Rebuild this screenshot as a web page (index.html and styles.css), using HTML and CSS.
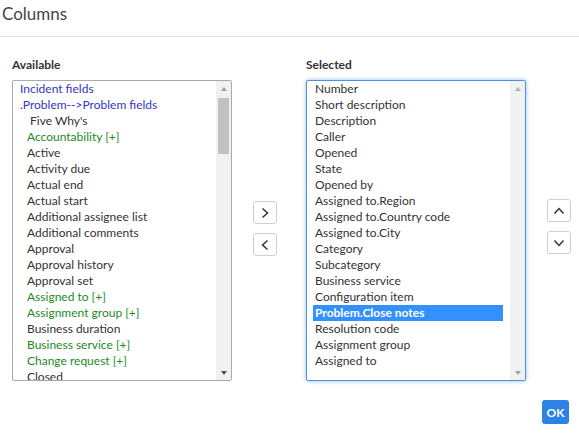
FILE: index.html
```html
<!DOCTYPE html>
<html>
<head>
<meta charset="utf-8">
<link rel="stylesheet" href="styles.css">
</head>
<body>
<div class="dialog">
  <div class="header"><span class="title">Columns</span></div>
  <div class="content">
    <div class="col">
      <div class="label">Available</div>
      <div class="listbox">
        <div class="list">
          <div class="item grp">Incident fields</div>
          <div class="item grp">.Problem--&gt;Problem fields</div>
          <div class="item sub">Five Why's</div>
          <div class="item opt ref">Accountability [+]</div>
          <div class="item opt">Active</div>
          <div class="item opt">Activity due</div>
          <div class="item opt">Actual end</div>
          <div class="item opt">Actual start</div>
          <div class="item opt">Additional assignee list</div>
          <div class="item opt">Additional comments</div>
          <div class="item opt">Approval</div>
          <div class="item opt">Approval history</div>
          <div class="item opt">Approval set</div>
          <div class="item opt ref">Assigned to [+]</div>
          <div class="item opt ref">Assignment group [+]</div>
          <div class="item opt">Business duration</div>
          <div class="item opt ref">Business service [+]</div>
          <div class="item opt ref">Change request [+]</div>
          <div class="item opt">Closed</div>
        </div>
        <div class="scrollbar">
          <div class="arrow up"></div>
          <div class="track"><div class="thumb"></div></div>
          <div class="arrow down"></div>
        </div>
      </div>
    </div>
    <div class="btns lr">
      <button class="iconbtn"><svg width="12" height="12" viewBox="0 0 12 12"><path d="M3.5 1.5 L8.5 6 L3.5 10.5" fill="none" stroke="#333" stroke-width="1.5"/></svg></button>
      <button class="iconbtn"><svg width="12" height="12" viewBox="0 0 12 12"><path d="M8.5 1.5 L3.5 6 L8.5 10.5" fill="none" stroke="#333" stroke-width="1.5"/></svg></button>
    </div>
    <div class="col">
      <div class="label">Selected</div>
      <div class="listbox focused">
        <div class="list sel">
          <div class="item">Number</div>
          <div class="item">Short description</div>
          <div class="item">Description</div>
          <div class="item">Caller</div>
          <div class="item">Opened</div>
          <div class="item">State</div>
          <div class="item">Opened by</div>
          <div class="item">Assigned to.Region</div>
          <div class="item">Assigned to.Country code</div>
          <div class="item">Assigned to.City</div>
          <div class="item">Category</div>
          <div class="item">Subcategory</div>
          <div class="item">Business service</div>
          <div class="item">Configuration item</div>
          <div class="item active">Problem.Close notes</div>
          <div class="item">Resolution code</div>
          <div class="item">Assignment group</div>
          <div class="item">Assigned to</div>
        </div>
        <div class="scrollbar light">
          <div class="arrow up"></div>
          <div class="track"></div>
          <div class="arrow down"></div>
        </div>
      </div>
    </div>
    <div class="btns ud">
      <button class="iconbtn"><svg width="12" height="12" viewBox="0 0 12 12"><path d="M1.5 8.5 L6 3.5 L10.5 8.5" fill="none" stroke="#333" stroke-width="1.5"/></svg></button>
      <button class="iconbtn"><svg width="12" height="12" viewBox="0 0 12 12"><path d="M1.5 3.5 L6 8.5 L10.5 3.5" fill="none" stroke="#333" stroke-width="1.5"/></svg></button>
    </div>
  </div>
  <div class="footer"><button class="ok">OK</button></div>
</div>
</body>
</html>
```
FILE: styles.css
```css
* { box-sizing: border-box; }
html, body { margin: 0; padding: 0; background: #fff; }
body {
  font-family: "Lato", "Open Sans", sans-serif;
  font-size: 12px;
  color: #333;
  width: 579px;
  height: 435px;
  overflow: hidden;
}
.header {
  height: 37px;
  border-bottom: 1px solid #e3e3e3;
  padding: 2px 0 0 2px;
}
.title {
  font-size: 17px;
  line-height: 24px;
  color: #444;
}
.content {
  display: flex;
  align-items: flex-start;
  padding: 20px 0 0 12px;
}
.col { width: 220px; }
.label {
  font-weight: bold;
  font-size: 12px;
  line-height: 16px;
  height: 16px;
  margin-bottom: 7px;
  color: #333;
}
.listbox {
  height: 301px;
  border: 1px solid #a9a9a9;
  border-radius: 2px;
  display: flex;
  overflow: hidden;
  background: #fff;
}
.listbox.focused {
  border-color: #4d90e0;
  box-shadow: 0 0 4px rgba(70, 140, 230, 0.6);
}
.list {
  flex: 1;
  overflow: hidden;
  padding-top: 0;
}
.item {
  line-height: 16px;
  height: 16px;
  white-space: nowrap;
  color: #333;
}
.grp { padding-left: 7px; color: #3535c8; }
.sub { padding-left: 17px; }
.opt { padding-left: 14px; }
.ref { color: #228b1e; }
.list.sel { padding: 0 7px 0 6px; }
.list.sel .item { padding-left: 2px; }
.list.sel .item.active {
  background: #3390ff;
  color: #fff;
  font-weight: bold;
}
.scrollbar {
  width: 15px;
  background: #f1f1f1;
  display: flex;
  flex-direction: column;
}
.arrow {
  height: 15px;
  display: flex;
  align-items: center;
  justify-content: center;
}
.arrow::before {
  content: "";
  width: 0;
  height: 0;
  border-left: 3.5px solid transparent;
  border-right: 3.5px solid transparent;
}
.arrow.up::before { border-bottom: 4px solid #a3a3a3; }
.arrow.down::before { border-top: 4px solid #505050; }
.scrollbar.light .arrow.up::before { border-bottom-color: #b5b5b5; }
.scrollbar.light .arrow.down::before { border-top-color: #a0a0a0; }
.track { flex: 1; padding: 2px 2px 0 2px; }
.thumb {
  height: 56px;
  background: #c1c1c1;
}
.btns {
  display: flex;
  flex-direction: column;
  gap: 9px;
  width: 24px;
}
.btns.lr { margin: 144px 29px 0 21px; }
.btns.ud { margin: 142px 0 0 21px; }
.iconbtn {
  width: 24px;
  height: 23px;
  padding: 0;
  border: 1px solid #cfcfcf;
  border-radius: 3px;
  background: #fff;
  display: flex;
  align-items: center;
  justify-content: center;
}
.footer {
  display: flex;
  justify-content: flex-end;
  padding: 19px 10px 0 0;
}
.ok {
  width: 27px;
  height: 24px;
  padding: 0;
  border: none;
  border-radius: 3px;
  background: #2d82e6;
  color: #fff;
  font-family: "Lato", "Open Sans", sans-serif;
  font-weight: bold;
  font-size: 12px;
}
```
